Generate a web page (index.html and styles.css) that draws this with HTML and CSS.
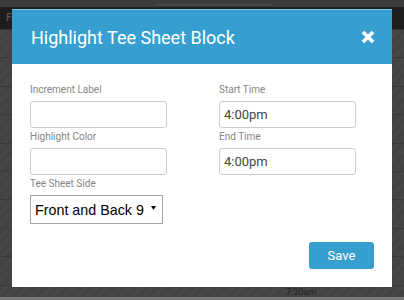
FILE: index.html
```html
<!DOCTYPE html>
<html>
<head>
<meta charset="utf-8">
<link rel="stylesheet" href="styles.css">
</head>
<body>
<div class="page">
  <div class="topstrip"><span class="topline"></span></div>
  <div class="topbar">Fr</div>
  <div class="rows">
    <span class="time">7:30am</span>
  </div>
  <div class="bottomline"></div>
</div>

<div class="modal">
  <div class="modal-header">
    <h1 class="title">Highlight Tee Sheet Block</h1>
    <svg class="close" width="14" height="14" viewBox="0 0 14 14">
      <path d="M2 2 L12 12 M12 2 L2 12" stroke="#fff" stroke-width="3.8" stroke-linecap="butt" fill="none"/>
    </svg>
  </div>
  <div class="modal-body">
    <div class="form-grid">
      <div class="col">
        <label class="lbl">Increment Label</label>
        <input class="inp" type="text" value="">
        <label class="lbl">Highlight Color</label>
        <input class="inp" type="text" value="">
        <label class="lbl">Tee Sheet Side</label>
        <div class="select-wrap">
          <select class="sel"><option>Front and Back 9</option></select>
          <svg class="arrow" width="5" height="4" viewBox="0 0 5 4"><path d="M0 0 H5 L2.5 4 Z" fill="#000"/></svg>
        </div>
      </div>
      <div class="col">
        <label class="lbl">Start Time</label>
        <input class="inp" type="text" value="4:00pm">
        <label class="lbl">End Time</label>
        <input class="inp" type="text" value="4:00pm">
      </div>
    </div>
    <div class="footer">
      <button class="btn">Save</button>
    </div>
  </div>
</div>
</body>
</html>
```

FILE: styles.css
```css
html, body {
  margin: 0;
  padding: 0;
}
body {
  width: 404px;
  height: 300px;
  overflow: hidden;
  position: relative;
  font-family: Roboto, "Liberation Sans", sans-serif;
  background: #444;
}
.page {
  display: flex;
  flex-direction: column;
  height: 300px;
}
.topstrip {
  height: 7px;
  background: #3c3c3c;
  position: relative;
}
.topline {
  position: absolute;
  left: 155px;
  top: 4px;
  width: 115px;
  height: 1px;
  background: #4c4c4c;
}
.topbar {
  height: 22px;
  background: #1e1e1e;
  color: #555;
  font-size: 10px;
  font-weight: bold;
  line-height: 22px;
  padding-left: 6px;
  border-bottom: 1px solid #333;
}
.rows {
  flex: 1;
  position: relative;
  background:
    repeating-linear-gradient(to bottom, transparent 0, transparent 27.4px, #3a3a3a 27.4px, #3a3a3a 28.4px),
    repeating-linear-gradient(135deg, #464646 0, #464646 4px, #424242 4px, #424242 8px);
}
.time {
  position: absolute;
  left: 286px;
  bottom: 0;
  font-size: 9px;
  line-height: 9px;
  color: #222;
}
.bottomline {
  height: 3px;
  background: #7a7a7a;
}
.modal {
  position: absolute;
  left: 12px;
  top: 9px;
  width: 380px;
  background: #fff;
}
.modal-header {
  height: 54px;
  border-top: 1px solid #7cc0e2;
  background: #379fcf;
  display: flex;
  align-items: center;
  justify-content: space-between;
  padding: 0 17px 0 19px;
}
.title {
  margin: 0;
  font-size: 18px;
  font-weight: normal;
  color: #fff;
  line-height: 21px;
}
.close {
  display: block;
}
.modal-body {
  padding: 19px 18px 18px 18px;
}
.form-grid {
  display: grid;
  grid-template-columns: 137px 137px;
  column-gap: 52px;
}
.col {
  display: flex;
  flex-direction: column;
}
.lbl {
  font-size: 10px;
  line-height: 14px;
  color: #858585;
  margin-bottom: 4px;
}
.inp {
  box-sizing: border-box;
  width: 137px;
  height: 27px;
  margin: 0 0 2px 0;
  border: 1px solid #ccc;
  border-radius: 3px;
  padding: 0 4px;
  font-family: Roboto, "Liberation Sans", sans-serif;
  font-size: 13px;
  color: #444;
  outline: none;
}
.select-wrap {
  position: relative;
  width: 133px;
  height: 29px;
}
.sel {
  -webkit-appearance: none;
  appearance: none;
  box-sizing: border-box;
  width: 133px;
  height: 29px;
  margin: 0;
  border: 1px solid #a6a6a6;
  border-radius: 0;
  background: #fff;
  padding: 0 0 0 4px;
  font-family: "Liberation Sans", Arial, sans-serif;
  font-size: 14.3px;
  color: #000;
  outline: none;
}
.arrow {
  position: absolute;
  left: 121px;
  top: 11px;
}
.footer {
  display: flex;
  justify-content: flex-end;
  margin-top: 18px;
}
.btn {
  width: 65px;
  height: 27px;
  border: none;
  border-radius: 3px;
  background: #379fcf;
  color: #fff;
  font-family: Roboto, "Liberation Sans", sans-serif;
  font-size: 13px;
  padding: 0;
}
```
